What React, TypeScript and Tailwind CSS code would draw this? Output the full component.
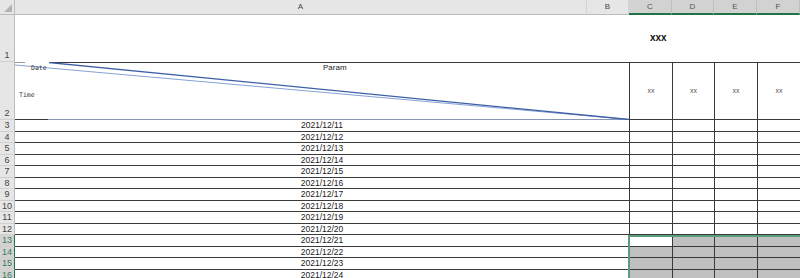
import React from "react";

const dates = [
  "2021/12/11",
  "2021/12/12",
  "2021/12/13",
  "2021/12/14",
  "2021/12/15",
  "2021/12/16",
  "2021/12/17",
  "2021/12/18",
  "2021/12/19",
  "2021/12/20",
  "2021/12/21",
  "2021/12/22",
  "2021/12/23",
  "2021/12/24",
];

const font = { fontFamily: '"Liberation Sans", Arial, sans-serif' };

function RowHeader({ n, selected, bottom }: { n: number; selected?: boolean; bottom?: boolean }) {
  return (
    <div
      className={`w-[15px] shrink-0 flex justify-center text-[9px] leading-none border-b border-[#d0d0d0] ${
        bottom ? "items-end pb-[1px]" : "items-center"
      } ${selected ? "bg-[#d2d2d2] text-[#3b7a5a] border-r border-r-[#217346]" : "bg-[#e6e6e6] text-[#444] border-r border-r-[#bcbcbc]"}`}
    >
      {n}
    </div>
  );
}

export default function App() {
  return (
    <div className="relative w-[800px] h-[278px] overflow-hidden bg-white" style={font}>
      {/* Column header */}
      <div className="flex h-[15px]">
        <div className="relative w-[15px] shrink-0 bg-[#e6e6e6] border-r border-b border-[#bcbcbc]">
          <svg width="15" height="15" className="absolute left-0 top-0">
            <polygon points="12,4 12,12 4,12" fill="#b3b3b3" />
          </svg>
        </div>
        <div className="w-[572px] shrink-0 bg-[#e6e6e6] border-r border-[#d4d4d4] border-b border-b-[#bcbcbc] flex items-center justify-center text-[8px] text-[#444]">
          A
        </div>
        <div className="w-[42px] shrink-0 bg-[#e6e6e6] border-r border-[#d4d4d4] border-b border-b-[#bcbcbc] flex items-center justify-center text-[8px] text-[#444]">
          B
        </div>
        {[
          ["C", "w-[43px]"],
          ["D", "w-[42px]"],
          ["E", "w-[43px]"],
          ["F", "w-[43px]"],
        ].map(([l, w]) => (
          <div
            key={l}
            className={`${w} shrink-0 bg-[#d2d2d2] border-r border-[#c0c0c0] border-b-2 border-b-[#217346] flex items-center justify-center text-[8px] text-[#555]`}
          >
            {l}
          </div>
        ))}
      </div>

      {/* Row 1 */}
      <div className="flex h-[47px]">
        <RowHeader n={1} bottom />
        <div className="flex-1 flex items-center pl-[635px] pb-[2px]">
          <span className="text-[10px] font-bold text-[#111]">xxx</span>
        </div>
      </div>

      {/* Row 2 */}
      <div className="flex h-[58px]">
        <RowHeader n={2} bottom />
        <div className="relative w-[614px] shrink-0">
          <svg width="614" height="58" className="absolute left-0 top-0">
            <line x1="0" y1="0.5" x2="10" y2="0.5" stroke="#9a9a9a" strokeWidth="1" />
            <line x1="34" y1="0.5" x2="614" y2="0.5" stroke="#3a3a3a" strokeWidth="1" />
            <line x1="0" y1="57.5" x2="33" y2="57.5" stroke="#3a3a3a" strokeWidth="1" />
            <line x1="33" y1="57.5" x2="614" y2="57.5" stroke="#8797b4" strokeWidth="1" />
            <line x1="0" y1="3" x2="614" y2="57.5" stroke="#86a2d4" strokeWidth="1" />
            <line x1="34" y1="0.5" x2="614" y2="57.5" stroke="#3d5fa6" strokeWidth="1.3" />
          </svg>
          <div className="relative flex items-center h-[12px]">
            <span
              className="ml-[16px] w-[292px] text-[6.5px] text-[#333] leading-none pt-[1px]"
              style={{ fontFamily: '"DejaVu Sans Mono", "Liberation Mono", monospace' }}
            >
              Date
            </span>
            <span className="text-[8px] text-[#222] leading-none">Param</span>
          </div>
          <div
            className="relative ml-[4px] mt-[17px] h-[8px] flex items-center text-[6.5px] text-[#333] leading-none"
            style={{ fontFamily: '"DejaVu Sans Mono", "Liberation Mono", monospace' }}
          >
            Time
          </div>
        </div>
        {[
          "w-[44px] border-l",
          "w-[42px]",
          "w-[43px]",
          "w-[43px]",
        ].map((w, i) => (
          <div
            key={i}
            className={`${w} shrink-0 border-t border-b border-r border-[#3a3a3a] flex items-center justify-center text-[7px] text-[#555]`}
          >
            xx
          </div>
        ))}
      </div>

      {/* Data rows */}
      {dates.map((d, idx) => {
        const rowNum = idx + 3;
        const h = idx % 2 === 0 ? "h-[12px]" : "h-[11px]";
        const sel = rowNum >= 13;
        return (
          <div key={d} className={`flex ${h}`}>
            <RowHeader n={rowNum} selected={sel} />
            <div className="w-[614px] shrink-0 border-b border-[#3a3a3a] flex items-center justify-center text-[8.5px] text-[#1a1a1a] leading-none">
              {d}
            </div>
            {[
              "w-[44px] border-l",
              "w-[42px]",
              "w-[43px]",
              "w-[43px]",
            ].map((w, i) => {
              const gray = (rowNum === 13 && i > 0) || rowNum > 13;
              return (
                <div
                  key={i}
                  className={`${w} shrink-0 border-b border-r border-[#3a3a3a] ${gray ? "bg-[#c0c0c0]" : "bg-white"}`}
                />
              );
            })}
          </div>
        );
      })}

      {/* Selection outline */}
      <div className="absolute left-[628px] top-[235px] w-[176px] h-[50px] border-2 border-[#5a9d7c] pointer-events-none" />
    </div>
  );
}
